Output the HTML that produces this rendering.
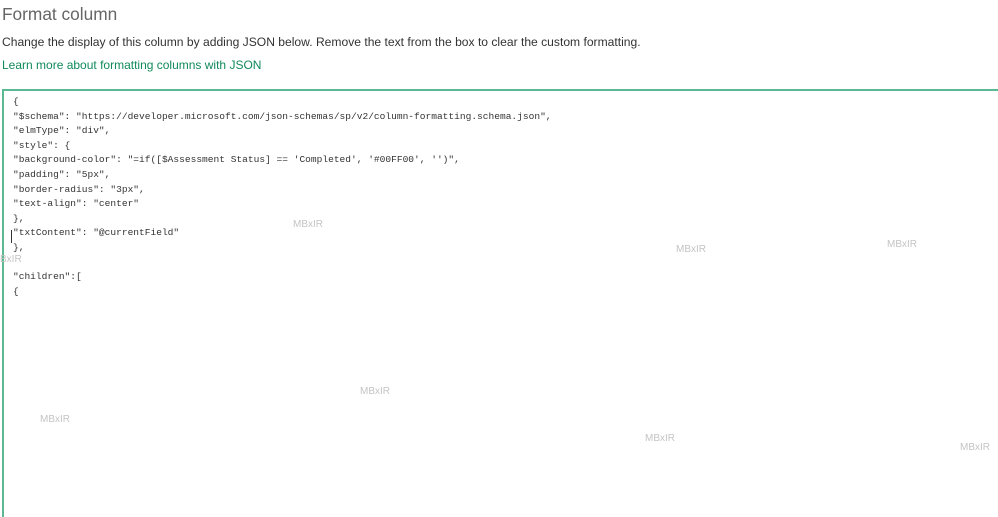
<!DOCTYPE html>
<html><head><meta charset="utf-8"><style>
html,body{margin:0;padding:0;width:998px;height:517px;overflow:hidden;background:#fff;position:relative;font-family:"Liberation Sans",sans-serif}
.t{position:absolute;white-space:nowrap}
.title{left:2px;top:4px;font-size:17.3px;color:#666;font-weight:300}
.desc{left:2px;top:35px;font-size:12.1px;color:#333}
.link{left:2px;top:58px;font-size:12px;color:#118a5a}
.box{position:absolute;left:2px;top:89px;width:1000px;height:440px;border-top:2px solid #5cb893;border-left:2px solid #5cb893}
.code{position:absolute;left:13px;top:95px;font-family:"Liberation Mono",monospace;font-size:9.55px;line-height:14.6px;color:#333;white-space:pre;margin:0}
.w{position:absolute;font-size:10px;color:#c4c4c4}
.cur{position:absolute;left:11px;top:230px;width:1px;height:13px;background:#333}
</style></head><body>
<div class="t title">Format column</div>
<div class="t desc">Change the display of this column by adding JSON below. Remove the text from the box to clear the custom formatting.</div>
<div class="t link">Learn more about formatting columns with JSON</div>
<div class="box"></div>
<pre class="code">{
"$schema": "https://developer.microsoft.com/json-schemas/sp/v2/column-formatting.schema.json",
"elmType": "div",
"style": {
"background-color": "=if([$Assessment Status] == 'Completed', '#00FF00', '')",
"padding": "5px",
"border-radius": "3px",
"text-align": "center"
},
"txtContent": "@currentField"
},

"children":[
{</pre>
<div class="cur"></div>
<div class="w" style="left:293px;top:219px">MBxIR</div>
<div class="w" style="left:0px;top:254px">BxIR</div>
<div class="w" style="left:676px;top:244px">MBxIR</div>
<div class="w" style="left:887px;top:239px">MBxIR</div>
<div class="w" style="left:360px;top:386px">MBxIR</div>
<div class="w" style="left:40px;top:414px">MBxIR</div>
<div class="w" style="left:645px;top:433px">MBxIR</div>
<div class="w" style="left:960px;top:442px">MBxIR</div>
</body></html>
